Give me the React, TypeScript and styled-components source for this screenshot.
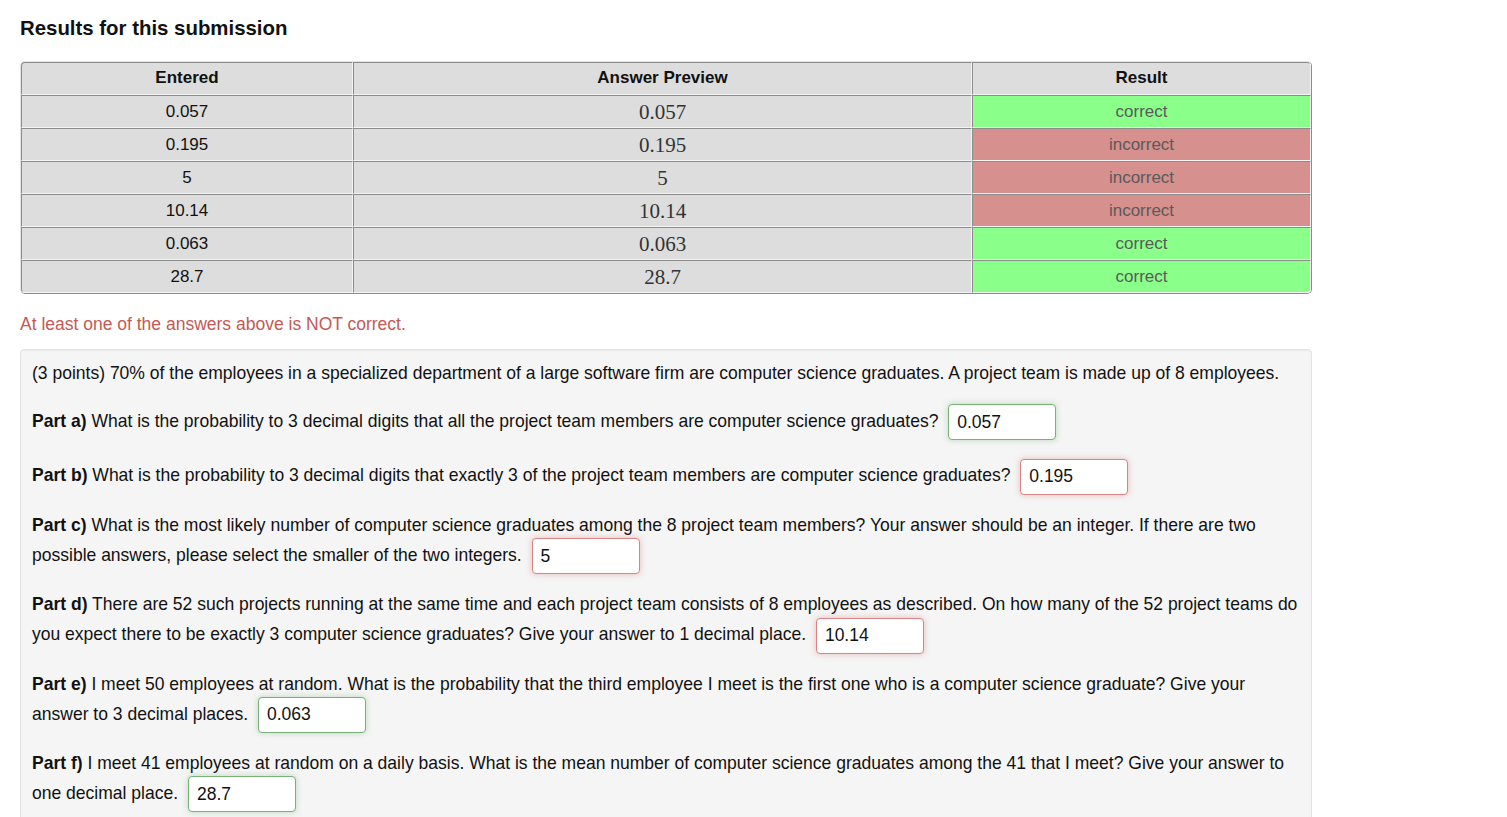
import React from "react";
import styled, { createGlobalStyle } from "styled-components";

const Global = createGlobalStyle`
  html, body { margin: 0; padding: 0; background: #fff; }
  body { font-family: "Liberation Sans", Arial, sans-serif; color: #111; }
`;

const Page = styled.div`
  padding: 16px 20px 0 20px;
  width: 1292px;
`;

const Heading = styled.h2`
  margin: 0 0 21px 0;
  font-size: 20.4px;
  font-weight: bold;
  line-height: 24px;
  color: #111;
`;

const Table = styled.table`
  width: 1292px;
  table-layout: fixed;
  border-collapse: separate;
  border-spacing: 0;
  border-top: 1px solid #e4e4e4;
  border-left: 1px solid #e4e4e4;
  border-right: 1px solid #8c8c8c;
  border-bottom: 1px solid #8c8c8c;
  border-radius: 5px;
  font-size: 17px;
`;

const Cell = styled.td<{ $bg?: string; $muted?: boolean; $math?: boolean }>`
  height: 33px;
  padding: ${(p) => (p.$math ? "2px 4px 0 4px" : "0 4px")};
  box-sizing: border-box;
  text-align: center;
  vertical-align: middle;
  background: ${(p) => p.$bg || "#dddddd"};
  color: ${(p) => (p.$muted ? "#5a5a5a" : p.$math ? "#333" : "#111")};
  font-family: ${(p) =>
    p.$math ? '"Liberation Serif", "Times New Roman", serif' : '"Liberation Sans", Arial, sans-serif'};
  font-size: ${(p) => (p.$math ? "21px" : "17px")};
  line-height: ${(p) => (p.$math ? "29px" : "30px")};
  border-top: 1px solid #8c8c8c;
  border-left: 1px solid #8c8c8c;
  border-right: 1px solid #f4f4f4;
  border-bottom: 1px solid #f4f4f4;
  tr:first-child > &:first-child { border-top-left-radius: 4px; }
  tr:first-child > &:last-child { border-top-right-radius: 4px; }
  tr:last-child > &:first-child { border-bottom-left-radius: 4px; }
  tr:last-child > &:last-child { border-bottom-right-radius: 4px; }
`;

const HeadCell = styled(Cell).attrs({ as: "th" })`
  font-weight: bold;
  padding: 0 4px 2px 4px;
  line-height: 28px;
`;

const Message = styled.div`
  margin: 20px 0 15px 0;
  font-size: 17.5px;
  line-height: 20px;
  color: #c45a53;
`;

const ProblemBox = styled.div`
  box-sizing: border-box;
  width: 1292px;
  padding: 8px 11px 20px 11px;
  background: #f5f5f5;
  border: 1px solid #e3e3e3;
  border-radius: 4px;
  box-shadow: inset 0 1px 1px rgba(0, 0, 0, 0.04);
`;

const Para = styled.p<{ $gap?: number }>`
  margin: 0 0 ${(p) => p.$gap ?? 18}px 0;
  font-size: 17.52px;
  line-height: 30px;
  color: #111;
`;

const Label = styled.b`
  font-weight: bold;
`;

const Answer = styled.input<{ $ok: boolean }>`
  box-sizing: border-box;
  width: 108px;
  height: 36px;
  margin: -3px 0 -3px 5px;
  padding: 0 8px;
  vertical-align: middle;
  font-family: "Liberation Sans", Arial, sans-serif;
  font-size: 17.5px;
  color: #111;
  background: #fff;
  border-radius: 4px;
  outline: none;
  border: 1px solid ${(p) => (p.$ok ? "#78b078" : "#d88484")};
  box-shadow: 0 0 6px
    ${(p) => (p.$ok ? "rgba(110, 180, 110, 0.45)" : "rgba(220, 110, 110, 0.45)")};
`;

const rows = [
  { v: "0.057", ok: true },
  { v: "0.195", ok: false },
  { v: "5", ok: false },
  { v: "10.14", ok: false },
  { v: "0.063", ok: true },
  { v: "28.7", ok: true },
];

const Input = ({ v, ok }: { v: string; ok: boolean }) => (
  <Answer $ok={ok} readOnly defaultValue={v} />
);

export default function App() {
  return (
    <Page>
      <Global />
      <Heading>Results for this submission</Heading>
      <Table>
        <colgroup>
          <col style={{ width: 332 }} />
          <col style={{ width: 619 }} />
          <col style={{ width: 339 }} />
        </colgroup>
        <tbody>
          <tr>
            <HeadCell>Entered</HeadCell>
            <HeadCell>Answer Preview</HeadCell>
            <HeadCell>Result</HeadCell>
          </tr>
          {rows.map((r, i) => (
            <tr key={i}>
              <Cell>{r.v}</Cell>
              <Cell $math>{r.v}</Cell>
              <Cell $muted $bg={r.ok ? "#8aff8a" : "#d6908e"}>
                {r.ok ? "correct" : "incorrect"}
              </Cell>
            </tr>
          ))}
        </tbody>
      </Table>
      <Message>At least one of the answers above is NOT correct.</Message>
      <ProblemBox>
        <Para>
          (3 points) 70% of the employees in a specialized department of a large software firm are
          computer science graduates. A project team is made up of 8 employees.
        </Para>
        <Para $gap={23}>
          <Label>Part a)</Label> What is the probability to 3 decimal digits that all the project team
          members are computer science graduates? <Input v="0.057" ok />
        </Para>
        <Para>
          <Label>Part b)</Label> What is the probability to 3 decimal digits that exactly 3 of the
          project team members are computer science graduates? <Input v="0.195" ok={false} />
        </Para>
        <Para>
          <Label>Part c)</Label> What is the most likely number of computer science graduates among the
          8 project team members? Your answer should be an integer. If there are two possible answers,
          please select the smaller of the two integers. <Input v="5" ok={false} />
        </Para>
        <Para>
          <Label>Part d)</Label> There are 52 such projects running at the same time and each project
          team consists of 8 employees as described. On how many of the 52 project teams do you expect
          there to be exactly 3 computer science graduates? Give your answer to 1 decimal place.{" "}
          <Input v="10.14" ok={false} />
        </Para>
        <Para>
          <Label>Part e)</Label> I meet 50 employees at random. What is the probability that the third
          employee I meet is the first one who is a computer science graduate? Give your answer to 3
          decimal places. <Input v="0.063" ok />
        </Para>
        <Para>
          <Label>Part f)</Label> I meet 41 employees at random on a daily basis. What is the mean number
          of computer science graduates among the 41 that I meet? Give your answer to one decimal
          place. <Input v="28.7" ok />
        </Para>
      </ProblemBox>
    </Page>
  );
}
